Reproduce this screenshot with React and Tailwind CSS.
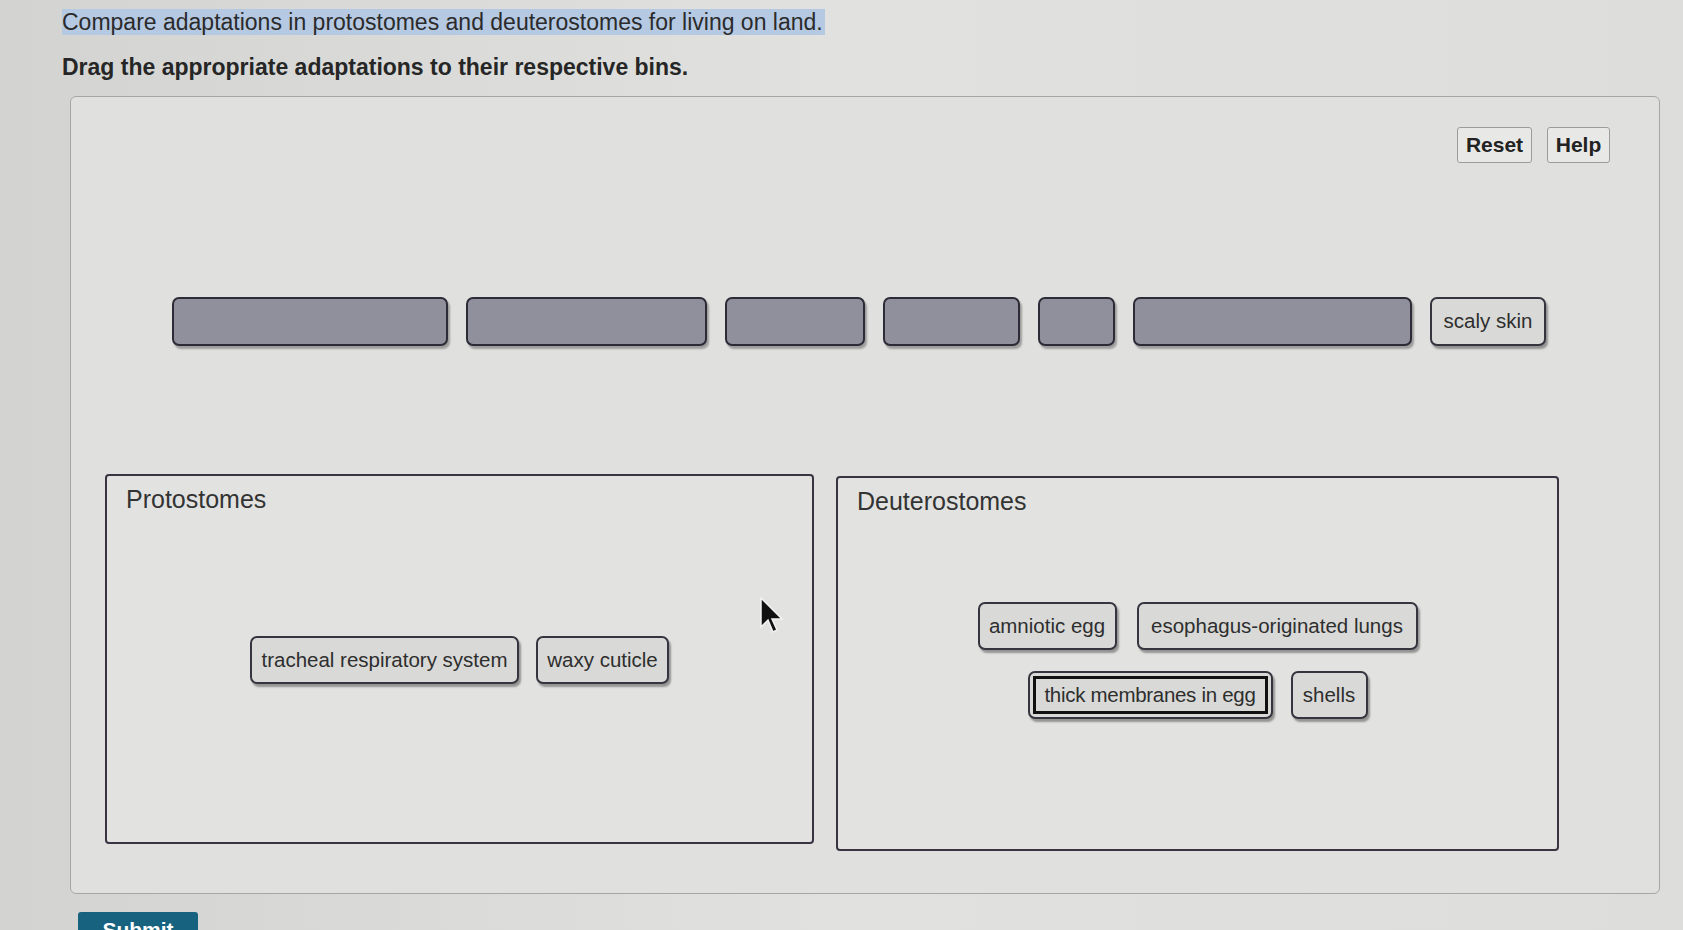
const slots = [276, 241, 140, 137, 77, 279];

const Chip = ({ children, className = "" }) => (
  <div
    className={`flex h-[48px] items-center justify-center whitespace-nowrap rounded-[7px] border-2 border-[#38343f] bg-[#d9dad7] px-0 text-[20.5px] text-[#2e2e2e] shadow-[2px_3px_2px_rgba(0,0,0,0.35)] ${className}`}
  >
    {children}
  </div>
);

const Bin = ({ label, className = "", children }) => (
  <div className={`flex flex-col rounded-[4px] border-2 border-[#3a3342] bg-[#e2e3e1] ${className}`}>
    <div className="pl-[19px] pt-[8px] text-[25px] leading-[30px] text-[#333]">{label}</div>
    <div className="flex flex-1 flex-col items-center justify-center gap-[21px] pb-[36px]">{children}</div>
  </div>
);

export default function App() {
  return (
    <div
      className="relative h-[930px] w-full overflow-hidden bg-linear-to-r from-[#d3d4d2] via-[#e1e2e0] to-[#dddedc] pl-[62px] pt-[8px] text-[#2b2b2b]"
      style={{ fontFamily: '"Liberation Sans", Arial, sans-serif' }}
    >
      <div className="text-[23px] leading-[28px]">
        <span className="bg-[#b6c9e2] pr-[2px]">
          Compare adaptations in protostomes and deuterostomes for living on land.
        </span>
      </div>
      <div className="mt-[17px] text-[23px] font-bold leading-[28px] text-[#262626]">
        Drag the appropriate adaptations to their respective bins.
      </div>

      <div className="ml-[8px] mt-[15px] w-[1590px] rounded-[6px] border border-[#a6a6a8] bg-[#e0e1df] pb-[42px] pt-[30px]">
        <div className="flex justify-end gap-[15px] pr-[49px]">
          <button className="h-[36px] w-[75px] rounded-[3px] border border-[#9c9c9e] bg-[#e8e9e7] text-[21px] font-bold text-[#222]">
            Reset
          </button>
          <button className="h-[36px] w-[63px] rounded-[3px] border border-[#9c9c9e] bg-[#e8e9e7] text-[21px] font-bold text-[#222]">
            Help
          </button>
        </div>

        <div className="mt-[134px] flex items-center gap-[18px] pl-[101px]">
          {slots.map((w, i) => (
            <div
              key={i}
              className="h-[49px] rounded-[7px] border-2 border-[#2e2b38] bg-[#8f909b] shadow-[2px_3px_2px_rgba(0,0,0,0.3)]"
              style={{ width: w }}
            />
          ))}
          <Chip className="h-[49px] w-[116px]">scaly skin</Chip>
        </div>

        <div className="mt-[128px] flex items-start gap-[22px] pl-[34px]">
          <Bin label="Protostomes" className="h-[370px] w-[709px]">
            <div className="flex gap-[17px]">
              <Chip className="w-[269px]">tracheal respiratory system</Chip>
              <Chip className="w-[133px]">waxy cuticle</Chip>
            </div>
          </Bin>
          <Bin label="Deuterostomes" className="mt-[2px] h-[375px] w-[723px]">
            <div className="-mt-[8px] flex gap-[20px]">
              <Chip className="w-[139px]">amniotic egg</Chip>
              <Chip className="w-[281px]">esophagus-originated lungs</Chip>
            </div>
            <div className="flex gap-[18px]">
              <Chip className="w-[245px] px-[3px]">
                <span className="flex h-[38px] w-full items-center justify-center border-[3px] border-[#111] leading-none tracking-[-0.3px]">
                  thick membranes in egg
                </span>
              </Chip>
              <Chip className="w-[77px]">shells</Chip>
            </div>
          </Bin>
        </div>
      </div>

      <div className="mt-[18px] flex items-start gap-[36px] pl-[16px]">
        <button className="h-[44px] w-[120px] rounded-t-[3px] bg-[#17637f] pb-[8px] text-[21px] font-bold text-white">
          Submit
        </button>
        <span className="pt-[10px] text-[21px] text-[#333]">Request Answer</span>
      </div>

      <svg
        className="absolute left-[760px] top-[597px]"
        width="24"
        height="38"
        viewBox="0 0 24 38"
      >
        <path d="M1 1 L1 30 L8 23 L13 35 L17 33 L12 22 L22 22 Z" fill="#111" stroke="#f2f2f2" strokeWidth="1.5" />
      </svg>
    </div>
  );
}
